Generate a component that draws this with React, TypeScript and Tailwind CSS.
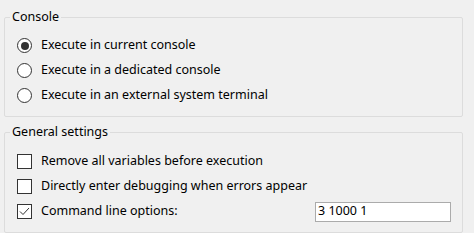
import React from "react";

const Radio = ({ checked }: { checked?: boolean }) => (
  <span className="w-[15px] h-[15px] rounded-full border border-[#333333] bg-white flex items-center justify-center shrink-0">
    {checked && <span className="w-[8px] h-[8px] rounded-full bg-[#333333]" />}
  </span>
);

const Check = ({ checked }: { checked?: boolean }) => (
  <span className="w-[15px] h-[15px] border border-[#333333] bg-white flex items-center justify-center shrink-0">
    {checked && (
      <svg width="13" height="13" viewBox="0 0 13 13">
        <polyline points="2,6.5 5,9.5 11,3" fill="none" stroke="#333333" strokeWidth="1" />
      </svg>
    )}
  </span>
);

export default function App() {
  return (
    <div
      className="w-[474px] h-[233px] bg-[#f0f0f0] overflow-hidden pt-[9px] text-[12.5px] text-black"
      style={{ fontFamily: '"Segoe UI", "Noto Sans", sans-serif' }}
    >
      <fieldset className="ml-[4px] w-[459px] border border-[#dcdcdc] rounded-[2px] pl-[5px] pr-[11px] pb-[8px]">
        <legend className="px-[2px] leading-[16px]">Console</legend>
        <div className="mt-[8px] ml-[7px] flex flex-col">
          <div className="h-[25px] flex items-center gap-[9px]">
            <Radio checked />
            <span>Execute in current console</span>
          </div>
          <div className="h-[25px] flex items-center gap-[9px]">
            <Radio />
            <span>Execute in a dedicated console</span>
          </div>
          <div className="h-[25px] flex items-center gap-[9px]">
            <Radio />
            <span>Execute in an external system terminal</span>
          </div>
        </div>
      </fieldset>
      <fieldset className="mt-[7px] ml-[4px] w-[459px] border border-[#dcdcdc] rounded-[2px] pl-[5px] pr-[11px] pb-[8px]">
        <legend className="px-[2px] leading-[16px]">General settings</legend>
        <div className="mt-[9px] ml-[7px] flex flex-col">
          <div className="h-[25px] flex items-center gap-[9px]">
            <Check />
            <span>Remove all variables before execution</span>
          </div>
          <div className="h-[25px] flex items-center gap-[9px]">
            <Check />
            <span>Directly enter debugging when errors appear</span>
          </div>
          <div className="h-[25px] flex items-center gap-[9px]">
            <Check checked />
            <span>Command line options:</span>
            <div className="ml-auto w-[136px] h-[20px] border border-[#ababab] bg-white flex items-center px-[2px]">
              3 1000 1
            </div>
          </div>
        </div>
      </fieldset>
    </div>
  );
}
